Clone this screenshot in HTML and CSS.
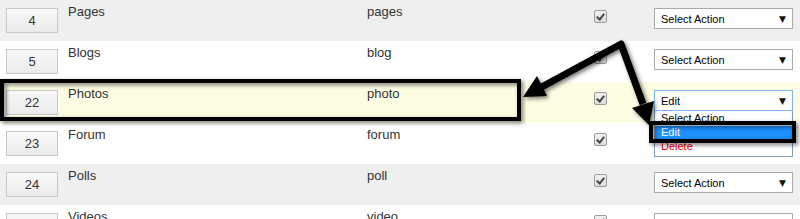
FILE: index.html
```html
<!DOCTYPE html>
<html>
<head>
    <link rel="stylesheet" href="styles.css">
</head>
<body>
    <div class="module-list">
        <div class="module-row gray">
            <div class="num">4</div>
            <div class="name">Pages</div>
            <div class="slug">pages</div>
            <div class="check"><span class="checkbox"></span></div>
            <div class="action"><div class="select">Select Action<span class="caret">&#9660;</span></div></div>
        </div>
        <div class="module-row">
            <div class="num">5</div>
            <div class="name">Blogs</div>
            <div class="slug">blog</div>
            <div class="check"><span class="checkbox"></span></div>
            <div class="action"><div class="select">Select Action<span class="caret">&#9660;</span></div></div>
        </div>
        <div class="module-row yellow">
            <div class="num">22</div>
            <div class="name">Photos</div>
            <div class="slug">photo</div>
            <div class="check"><span class="checkbox"></span></div>
            <div class="action">
                <div class="select open">Edit<span class="caret">&#9660;</span></div>
                <!-- open dropdown -->
                <ul class="options">
                    <li>Select Action</li>
                    <li class="hl">Edit</li>
                    <li class="del">Delete</li>
                </ul>
            </div>
        </div>
        <div class="module-row">
            <div class="num">23</div>
            <div class="name">Forum</div>
            <div class="slug">forum</div>
            <div class="check"><span class="checkbox"></span></div>
            <div class="action"></div>
        </div>
        <div class="module-row gray">
            <div class="num">24</div>
            <div class="name">Polls</div>
            <div class="slug">poll</div>
            <div class="check"><span class="checkbox"></span></div>
            <div class="action"><div class="select">Select Action<span class="caret">&#9660;</span></div></div>
        </div>
        <div class="module-row">
            <div class="num">25</div>
            <div class="name">Videos</div>
            <div class="slug">video</div>
            <div class="check"><span class="checkbox"></span></div>
            <div class="action"><div class="select">Select Action<span class="caret">&#9660;</span></div></div>
        </div>
    </div>

    <!-- annotation layer -->
    <svg class="notes" width="800" height="219" viewBox="0 0 800 219">
        <g fill="none" stroke="#000" stroke-width="4">
            <rect x="2" y="81" width="517" height="38"/>
            <rect x="651" y="123" width="143" height="18"/>
        </g>
        <polyline points="536,90 621,44 643,104" fill="none" stroke="#000" stroke-width="7" stroke-linejoin="round"/>
        <polygon points="523,97 537,76 547,96" fill="#000"/>
        <polygon points="649,125 632,108 654,101" fill="#000"/>
    </svg>
</body>
</html>
```

FILE: styles.css
```css
body {
    margin: 0;
    font-family: "Liberation Sans", Arial, sans-serif;
    color: #333;
    background: #fff;
}

.module-list {
    width: 800px;
    height: 219px;
    overflow: hidden;
}

.module-row {
    display: flex;
    height: 41px;
    padding-left: 6px;
    box-sizing: border-box;
    background: #fff;
}

.module-row.gray {
    background: #efefef;
}

.module-row.yellow {
    background: #fdfde3;
}

.num {
    width: 52px;
    height: 25px;
    margin-top: 8px;
    box-sizing: border-box;
    border: 1px solid #c8c8c8;
    background: linear-gradient(#f8f8f8, #ebebeb);
    padding-top: 4px;
    font-size: 13px;
    line-height: 15px;
    text-align: center;
}

.name {
    width: 299px;
    margin-left: 10px;
    padding-top: 4px;
    font-size: 13px;
    line-height: 15px;
}

.slug {
    width: 227px;
    padding-top: 4px;
    font-size: 13px;
    line-height: 15px;
}

.check {
    width: 60px;
    padding-top: 10px;
}

.checkbox {
    display: block;
    position: relative;
    width: 13px;
    height: 13px;
    box-sizing: border-box;
    border: 1px solid #9a9a9a;
    border-radius: 2px;
    background: linear-gradient(#f2f2f2, #dcdcdc);
}

.checkbox::after {
    content: "";
    position: absolute;
    left: 3px;
    top: 1px;
    width: 3px;
    height: 6px;
    border: solid #444;
    border-width: 0 2px 2px 0;
    transform: rotate(40deg);
}

.action {
    position: relative;
    padding-top: 8px;
}

.select {
    width: 139px;
    height: 21px;
    box-sizing: border-box;
    border: 1px solid #aaa;
    background: #fff;
    padding: 1px 0 0 6px;
    font-size: 11px;
    line-height: 18px;
    color: #000;
    position: relative;
}

.select.open {
    border-color: #7eb4ea;
}

.caret {
    position: absolute;
    right: 6px;
    top: 1px;
    font-family: "DejaVu Sans", sans-serif;
    font-size: 9px;
    color: #111;
}

.options {
    position: absolute;
    left: 0;
    top: 29px;
    width: 139px;
    margin: 0;
    padding: 1px 0 0;
    list-style: none;
    box-sizing: border-box;
    border: 1px solid #7f9db9;
    border-top: none;
    background: #fff;
    font-size: 11px;
    color: #000;
    z-index: 2;
}

.options li {
    height: 14px;
    line-height: 13px;
    padding-left: 6px;
}

.options li.hl {
    background: #1e90ff;
    color: #fff;
}

.options li.del {
    color: #e00;
    height: 16px;
}

.notes {
    position: absolute;
    left: 0;
    top: 0;
    z-index: 5;
    pointer-events: none;
    filter: drop-shadow(2px 2px 2px rgba(0, 0, 0, 0.55));
}
```
